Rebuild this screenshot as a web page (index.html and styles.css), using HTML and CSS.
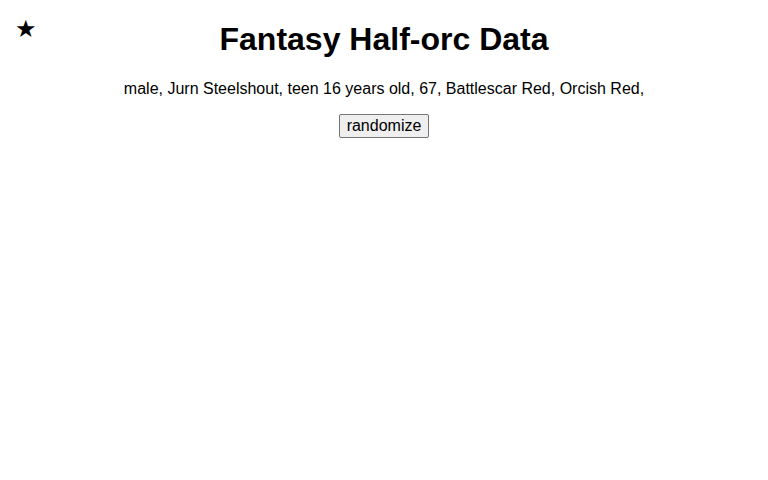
FILE: index.html
```html
<!DOCTYPE html>
<html>
<head>
<meta charset="utf-8">
<link rel="stylesheet" href="styles.css">
</head>
<body>
<span class="star">★</span>
<main class="content">
<h1 class="title">Fantasy Half-orc Data</h1>
<p class="data">male, Jurn Steelshout, teen 16 years old, 67, Battlescar Red, Orcish Red,</p>
<button class="btn">randomize</button>
</main>
</body>
</html>
```
FILE: styles.css
```css
body {
  margin: 0 8px 8px;
  font-family: "Liberation Sans", Arial, sans-serif;
  color: #000;
  background: #fff;
}
.star {
  position: absolute;
  left: 15px;
  top: 14px;
  font-size: 24px;
  line-height: 30px;
  font-family: "DejaVu Sans", sans-serif;
}
.content {
  text-align: center;
}
.title {
  font-size: 32px;
  font-weight: bold;
  margin: 21.44px 0;
}
.data {
  font-size: 16px;
  margin: 16px 0;
}
.btn {
  font-family: "Liberation Sans", Arial, sans-serif;
  font-size: 16px;
  padding: 2px 7px;
  border: 1px solid #767676;
  border-radius: 2px;
  background: #efefef;
  color: #000;
}
```
